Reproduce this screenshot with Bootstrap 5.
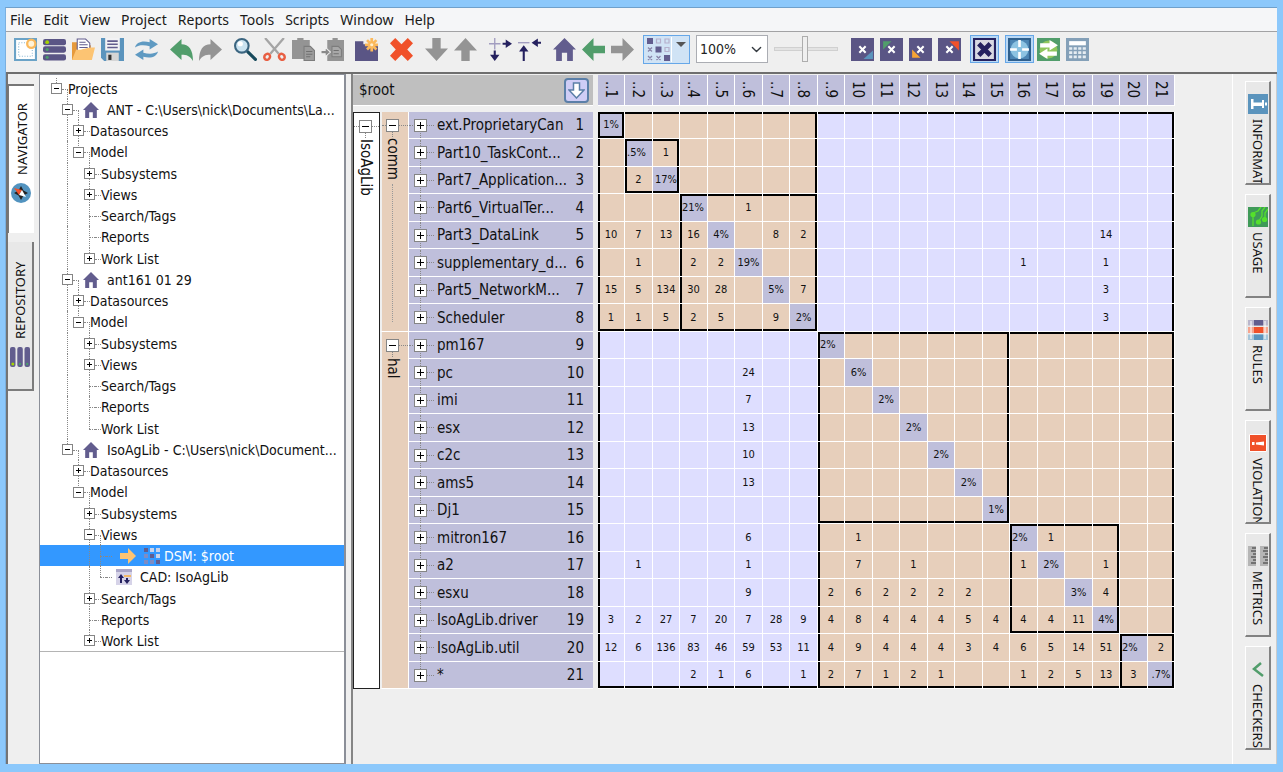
<!DOCTYPE html>
<html lang="en">
<head>
<meta charset="utf-8">
<meta name="viewport" content="width=device-width, initial-scale=1">
<title>IsoAgLib - DSM: $root</title>
<link rel="stylesheet" href="https://cdn.jsdelivr.net/npm/bootstrap@5.3.0/dist/css/bootstrap.min.css">
<style>
:root{--ui:"DejaVu Sans Condensed","Noto Sans",sans-serif;--cell:#bfbfdb;--peach:#e7cfbb;--lav:#dedeff}
body{background:#8cc8fb;font-family:var(--ui);font-size:14px;color:#111;line-height:20px}
button{color:inherit}
.frame{height:100vh;padding:7px 6px 8px 5px}
.app-window{background:#efefef;border-top:1px solid #6fa0cb;border-left:1px solid #7ab0e0}
.menu-row{height:24px;background:#f5f6f8;border-bottom:1px solid #a2a2a4;padding-left:4px;font-family:"Noto Sans",sans-serif}
.menu-row a{color:#1a1a1a;text-decoration:none;margin-right:11px}
.tools{height:42px;padding:0 0 6px 5px;border-bottom:2px solid #6e6e6e}
.tb-group{display:flex;align-items:center;margin-right:6px}
.tb-group.tight{margin-right:5px}
.tb{width:29px;height:28px;padding:0;border:0;background:none;display:flex;align-items:center;justify-content:center}
.tb svg{width:23px;height:23px;display:block}
.tb.on{background:#b9d8f5;border:1px solid #66a7e8}
.split-on{border:1px solid #66a7e8;background:#d0e3f5;height:29px;width:47px;margin-right:6px}
.split-on button{border:0;background:none;padding:0}
.split-on .drop{border-left:1px solid #fff;width:18px;height:25px;padding-bottom:10px;display:flex;align-items:center;justify-content:center}
.zoom-pick{width:72px;height:28px;border:1px solid #abadb3;border-radius:0;padding:0 24px 0 3px;font-size:14px;background-color:#fff;background-position:right 5px center;background-size:11px 11px;color:#222}
.zoom-slide{appearance:none;width:64px;height:26px;margin:0 10px 0 6px;background:none}
.zoom-slide::-webkit-slider-runnable-track{height:4px;background:#e3e3e3;border:1px solid #d0d0d0}
.zoom-slide::-webkit-slider-thumb{appearance:none;width:6px;height:26px;margin-top:-12px;background:#efefef;border:1px solid #adadad}
/* side tabs */
.left-tabs{width:33px;border-left:2px solid #747474;padding:10px 5px 0 0;flex:none}
.side-tab{writing-mode:vertical-rl;display:flex;align-items:center;border:0;padding:0;overflow:hidden;white-space:nowrap;font-family:"Noto Sans",sans-serif;font-size:13px;line-height:20px;background:#e8e8e8;width:100%}
.side-tab svg{width:20px;height:20px;flex:none}
.left-tabs .side-tab{transform:rotate(180deg);height:149px;padding:22px 0;gap:8px;border-left:2px solid #7c7c7c;border-top:2px solid #7c7c7c;margin-bottom:9px}
.left-tabs .side-tab.current{background:#fff;padding-top:30px;border:0;border-bottom:2px solid #777;border-right:1px solid #777}
.right-tabs{width:45px;border-left:1px solid #fff;border-right:1px solid #ccc;padding:7px 5px 0 12px;flex:none}
.right-tabs .side-tab{height:104px;padding-top:12px;gap:5px;border:1px solid #fff;border-right:2px solid #828282;border-bottom:2px solid #828282;margin-bottom:9px}
/* project tree */
.tree-panel{width:307px;border:1px solid #8b8f98;border-right-width:2px;background:#fff;flex:none;padding-top:3px;margin-right:5px}
.tree{border-bottom:1px solid #b4b4b4}
.tree li{display:flex;align-items:stretch;height:21px;line-height:22px;padding-left:11px;white-space:nowrap}
.tree li:nth-child(4n){height:22px}
.tree li.picked{background:#3398ff;color:#fff}
.gd{width:11px;flex:none;display:flex;align-items:center;justify-content:center;position:relative}
.gd::before{content:"";position:absolute;left:5px;border-left:1px dotted #888;top:0;bottom:0;display:none}
.gd.full::before,.gd.up::before{display:block}
.gd.up::before{bottom:50%}
.gd.leaf::after{content:"";position:absolute;left:5px;right:0;top:50%;border-top:1px dotted #888}
.stub{width:6px;flex:none;position:relative}
.stub::before{content:"";position:absolute;left:0;right:0;top:50%;border-top:1px dotted #888}
.stub.open::after{content:"";position:absolute;right:0;top:50%;bottom:0;border-left:1px dotted #888}
.tog{width:11px;height:11px;flex:none;padding:0;border:1px solid #858585;background:#fff;position:relative;z-index:1}
.tog::before,.tog.plus::after{content:"";position:absolute;background:#000;left:2px;right:2px;top:4px;height:1px}
.tog.plus::after{left:4px;right:4px;top:2px;bottom:2px;height:auto}
.tree svg{width:16px;height:16px;align-self:center;flex:none}
/* dependency matrix */
.matrix-pane{min-width:0;border-left:2px solid #858585;padding-top:1px;overflow:hidden}
.dsm{border-collapse:separate;border-spacing:0;table-layout:fixed;width:822px;line-height:16px}
.dsm th,.dsm td{padding:0;font-weight:400;overflow:hidden;white-space:nowrap}
.dsm col.even{width:28px}.dsm col.odd{width:27px}
.dsm col.c-root{width:27px}.dsm col.c-pkg{width:29px}.dsm col.c-name{width:184px}.dsm col.c-gap{width:5px}
.dsm thead th{height:31px;background:var(--cell);border-right:1px solid #fff;border-bottom:1px solid #fff;vertical-align:top}
.dsm thead th.corner{background:#bfbfbf;border-right:0;vertical-align:middle}
.corner>div{padding:0 4px 0 6px}
.dsm thead th.blank,.dsm td.blank{background:none;border:0}
.dsm thead tr.space td{height:6px}
.colno{writing-mode:vertical-rl;font-size:15px;line-height:26px;height:30px;text-align:center}
.corner,.lbl{font-size:15px}
.dsm tbody tr{height:27px}
.dsm tbody tr:nth-child(even){height:28px}
.dsm .rowname{background:var(--cell);border-bottom:1px solid #fff}
.lbl{height:26px;padding:0 9px 0 5px;position:relative}
.lbl::before{content:"";position:absolute;left:11px;top:0;bottom:0;border-left:1px dotted #888}
.lbl.first::before{top:50%}
.lbl.last::before{bottom:50%}
.lbl.first::after{content:"";position:absolute;left:0;width:6px;top:50%;border-top:1px dotted #888}
.dsm .tog{width:13px;height:13px}
.dsm .tog::before{top:5px}
.dsm .tog.plus::after{left:5px;right:5px;top:2px;bottom:2px}
.wire{width:7px;border-top:1px dotted #888;flex:none;margin-right:3px}
.dsm .root-cell{background:#fff;border:1px solid #222}
.dsm .root-cell,.dsm .pkg-cell{vertical-align:top}
.dsm .pkg-cell{background:var(--peach);border-left:2px solid #efefef;border-right:1px solid #fff;border-bottom:1px solid #fff}
.col-stack{display:flex;flex-direction:column;align-items:center;padding:7px 2px 0 0;position:relative}
.pkg-cell .col-stack{padding-right:5px}
.col-stack::before{content:"";position:absolute;left:0;right:0;top:13px;border-top:1px dotted #888}
.pkg-cell.late .col-stack::before{left:50%}
.drop-wire{height:5px;border-left:1px dotted #888}
.down-text{writing-mode:vertical-rl;margin-top:1px;line-height:20px;font-size:15px}
.trail{height:138px;border-left:1px dotted #999;margin-top:4px}
.dsm .num{text-align:center;font-size:11px;background:var(--lav);border-right:1px solid #fff;border-bottom:1px solid #fff;box-shadow:var(--t,0 0 #0000),var(--b,0 0 #0000),var(--l,0 0 #0000),var(--r,0 0 #0000)}
.dsm .num.same{background:var(--peach)}
.dsm .num.self{background:var(--cell)}
.dsm .num.self.e-l:not(.e-r){text-align:left;padding-left:2px}
.e-t{--t:inset 0 2px #000}.e-b{--b:inset 0 -2px #000}.e-l{--l:inset 2px 0 #000}.e-r{--r:inset -2px 0 #000}
.sort-btn{width:25px;height:25px;border:2px solid #5b7fa8;border-radius:4px;background:#cfcdf6;padding:0}
</style>
</head>
<body>
<svg class="d-none" aria-hidden="true">
  <symbol id="i-house" viewBox="0 0 22 22"><path fill="#625d8e" d="M11 0 22 11H19V22H13.500V14H8.500V22H3V11H0Z"/></symbol>
  <symbol id="i-server" viewBox="0 0 22 22"><g fill="#5a5585"><rect y="1" x="0" width="22" height="6" rx="2"/><rect y="8" width="22" height="6" rx="2"/><rect y="15.500" width="22" height="6" rx="2"/></g><circle cx="4" cy="4" r="1.800" fill="#a5d400"/><circle cx="4" cy="11" r="1.500" fill="#4c9c6c"/><circle cx="4" cy="18.500" r="1.500" fill="#4c9c6c"/></symbol>
  <symbol id="i-grid" viewBox="0 0 24 24"><g fill="#625d8e"><path d="M1 1h6v6H1zM9.500 9.500h6v6h-6zM18 18h6v6h-6z"/></g><g fill="none" stroke="#b5b0cc" stroke-width="1.200"><path d="M10.500 2h4v4h-4zM19 2h4v4h-4zM19 10.500h4v4h-4z"/></g><path stroke="#8a86aa" stroke-width="1.300" d="m2 10.500 4 4m0-4-4 4M2 19l4 4m0-4-4 4M10.500 19l4 4m0-4-4 4"/></symbol>
  <symbol id="i-grid-small" viewBox="0 0 16 16"><path fill="#625d8e" d="M0 0h4v4H0zM6 6h4v4H6zM12 12h4v4h-4z"/><path fill="#c9d3ea" d="M6 0h4v4H6zM12 0h4v4h-4zM12 6h4v4h-4z"/><path fill="#7d8cc4" d="M0 6h4v4H0zM0 12h4v4H0zM6 12h4v4H6z"/></symbol>
  <symbol id="i-badge" viewBox="0 0 22 22"><path fill="#5a5585" d="M0 0h22v22H0z"/><path stroke="#fff" stroke-width="2" d="m8 8 6 6m0-6-6 6"/></symbol>
</svg>
<div class="frame">
<div class="app-window d-flex flex-column h-100">
  <nav class="menu-row d-flex align-items-center flex-shrink-0" aria-label="Menu">
    <a href="#">File</a><a href="#">Edit</a><a href="#">View</a><a href="#">Project</a><a href="#">Reports</a><a href="#">Tools</a><a href="#">Scripts</a><a href="#">Window</a><a href="#">Help</a>
  </nav>
  <div class="tools d-flex align-items-center flex-shrink-0" role="toolbar" aria-label="Tools">
    <div class="tb-group tight">
      <button class="tb" aria-label="New"><svg viewBox="0 0 22 22"><path fill="#fff" stroke="#6ba3c7" stroke-width="2" d="M1 1h20v20H1z"/><path fill="none" stroke="#8dbad5" stroke-dasharray="1 1.500" d="M4.500 4.500h13v13h-13z"/><circle cx="16.500" cy="5.500" r="5" fill="#fbb95c"/><circle cx="16.500" cy="5.500" r="2.800" fill="#fff3d8"/></svg></button>
      <button class="tb" aria-label="Repository"><svg><use href="#i-server"/></svg></button>
      <button class="tb" aria-label="Open"><svg viewBox="0 0 22 22"><path fill="#e69a3c" d="M0 4h5l2 3h11v14H0z"/><path fill="#fff" stroke="#625d8e" d="M5 1h8l4 4v8H5z"/><path stroke="#625d8e" d="M7 4h6M7 6.500h8M7 9h8"/><path fill="#fcc473" d="M4 11c6 1 7-2 18-2l-3 12H0z"/></svg></button>
      <button class="tb" aria-label="Save"><svg viewBox="0 0 22 22"><path fill="#5b94bd" d="M0 0h22v22H3l-3-3z"/><path fill="#f2f2f4" d="M4 0h14v12H4z"/><path stroke="#625d8e" stroke-width="1.500" d="M6 3h10M6 6h10M6 9h10"/><path fill="#d5d5d5" d="M5 14h12v8H5z"/><path fill="#333" d="M7 16h3v5H7z"/></svg></button>
    </div>
    <div class="tb-group"><button class="tb" aria-label="Refresh"><svg viewBox="0 0 22 22"><path fill="#5f9ac2" d="M0 9C1 4 7 2 14 4V1l8 5-8 5V8C9 6.500 4 6.500 0 9ZM22 13c-1 5-7 7-14 5v3l-8-5 8-5v3c5 1.500 10 1.500 14-1Z"/></svg></button></div>
    <div class="tb-group">
      <button class="tb" aria-label="Undo"><svg viewBox="0 0 22 22"><path fill="#519d6b" d="M0 11 11 1v5c7 0 11 5 11 16-3-5-6-6-11-6v5Z"/></svg></button>
      <button class="tb" aria-label="Redo"><svg viewBox="0 0 22 22"><path fill="#949494" d="M22 11 11 1v5C4 6 0 11 0 22c3-5 6-6 11-6v5Z"/></svg></button>
    </div>
    <div class="tb-group tight">
      <button class="tb" aria-label="Find"><svg viewBox="0 0 22 22"><path stroke="#174a5c" stroke-width="3" stroke-linecap="round" d="m13 13 7.500 7.500"/><circle cx="7.500" cy="7.500" r="6.500" fill="#cbe3f0" stroke="#3b6580" stroke-width="2"/><circle cx="6" cy="5.500" r="2.500" fill="#fff"/></svg></button>
      <button class="tb" aria-label="Cut"><svg viewBox="0 0 22 22"><path stroke="#a5a5a5" stroke-width="2.200" d="M2 0 15 15M20 0 7 15"/><g fill="none" stroke="#e85f43" stroke-width="2.400"><ellipse cx="4" cy="18" rx="2.600" ry="3" transform="rotate(35 4 18)"/><ellipse cx="18" cy="18" rx="2.600" ry="3" transform="rotate(-35 18 18)"/></g></svg></button>
      <button class="tb" aria-label="Copy"><svg viewBox="0 0 22 22"><path fill="#949494" d="M0 2h5V0h6v2h6v18H0z"/><path fill="#9c9c9c" stroke="#7c7c7c" d="M11.500 8h6l4 4v9.500h-10z"/><path stroke="#707070" d="M13.500 13h6M13.500 15.500h6M13.500 18h4"/></svg></button>
      <button class="tb" aria-label="Paste"><svg viewBox="0 0 22 22"><path fill="#949494" d="M6 2h5V0h5v2h6v20H6z"/><path fill="#8a8a8a" stroke="#efefef" d="M0 12h4V9l5 4.500L4 18v-3H0z"/><path fill="#a8a8a8" stroke="#7c7c7c" d="M10.500 8h6l3 3v7h-9z"/><path stroke="#707070" d="M12 12h5M12 15h5"/></svg></button>
    </div>
    <div class="tb-group"><button class="tb" aria-label="New package"><svg viewBox="0 0 22 22"><path fill="#5a5585" d="M0 6h22v16H0zM0 3h8v4H0z"/><path stroke="#fbb95c" stroke-width="2.600" d="M16 0v13M9.500 6.500h13M11.500 2l9 9M20.500 2l-9 9"/><circle cx="16" cy="6.500" r="1.500" fill="#fff0d0"/></svg></button></div>
    <div class="tb-group"><button class="tb" aria-label="Delete"><svg viewBox="0 0 22 22"><path fill="#f0512a" d="M5 0l6 6 6-6 5 5-5.500 6 5.500 6-5 5-6-6-6 6-5-5 5.500-6L0 5z"/></svg></button></div>
    <div class="tb-group">
      <button class="tb" aria-label="Down"><svg viewBox="0 0 22 22"><path fill="#949494" d="M7 0h8v10h7L11 22 0 10h7z"/></svg></button>
      <button class="tb" aria-label="Up"><svg viewBox="0 0 22 22"><path fill="#949494" d="M7 22h8V12h7L11 0 0 12h7z"/></svg></button>
    </div>
    <div class="tb-group">
      <button class="tb" aria-label="Expand"><svg viewBox="0 0 22 22"><path stroke="#a29dc0" stroke-width="1.300" d="M0 5.500h11M5.500 0v11"/><path fill="#25215f" d="M13 4.500h3V1.500l6 4-6 4v-3h-3zM4.500 12h2v4h3.500L5.500 22 1 16h3.500z"/></svg></button>
      <button class="tb" aria-label="Collapse"><svg viewBox="0 0 22 22"><path stroke="#a29dc0" stroke-width="1.300" d="M0 4.500h11"/><path fill="#25215f" d="M22 3.500h-3V.5l-6 4 6 4v-3h3zM4.500 22h2v-9H10L5.500 7 1 13h3.500z"/></svg></button>
    </div>
    <div class="tb-group">
      <button class="tb" aria-label="Home"><svg><use href="#i-house"/></svg></button>
      <button class="tb" aria-label="Back"><svg viewBox="0 0 22 22"><path fill="#519d6b" d="M22 7.500H11V0L0 11l11 11v-7.500h11z"/></svg></button>
      <button class="tb" aria-label="Forward"><svg viewBox="0 0 22 22"><path fill="#949494" d="M0 7.500h11V0l11 11-11 11v-7.500H0z"/></svg></button>
    </div>
    <div class="split-on d-flex align-items-center">
      <button class="flex-fill" aria-label="Matrix view"><svg class="d-block mx-auto" width="24" height="24"><use href="#i-grid"/></svg></button>
      <button class="drop" aria-label="Matrix view options"><svg width="10" height="5"><path fill="#555" d="M0 0h10L5 5z"/></svg></button>
    </div>
    <select class="form-select zoom-pick" aria-label="Zoom"><option>100%</option><option>50%</option></select>
    <input type="range" class="zoom-slide" min="0" max="100" value="48" aria-label="Zoom level">
    <div class="tb-group">
      <button class="tb" aria-label="Lower right"><svg viewBox="0 0 22 22"><use href="#i-badge"/><path fill="#5b94bd" d="M21 12v8h-9z"/></svg></button>
      <button class="tb" aria-label="Upper left"><svg viewBox="0 0 22 22"><use href="#i-badge"/><path fill="#519d6b" d="M3 3h8l-8 8z"/></svg></button>
      <button class="tb" aria-label="Lower left"><svg viewBox="0 0 22 22"><use href="#i-badge"/><path fill="#f8a534" d="M3 11v8h8z"/></svg></button>
      <button class="tb" aria-label="Upper right"><svg viewBox="0 0 22 22"><use href="#i-badge"/><path fill="#f0512a" d="M11 3h9v9z"/></svg></button>
    </div>
    <div class="tb-group"><button class="tb on" aria-label="Dependencies"><svg viewBox="0 0 22 22"><path fill="#d9d9e2" stroke="#25215f" stroke-width="2" d="M1 1h20v20H1z"/><path stroke="#25215f" stroke-width="4.500" d="m5.500 5.500 11 11m0-11-11 11"/></svg></button></div>
    <div class="tb-group">
      <button class="tb on" aria-label="Partition"><svg viewBox="0 0 22 22"><path fill="#4c86b4" stroke="#2f5f8c" stroke-width="2" d="M1 1h20v20H1z"/><circle cx="11" cy="11" r="8.500" fill="#8cc3e2"/><path stroke="#fff" stroke-width="2.500" d="M11 2v6.500M11 13.500V20M2 11h6.500M13.500 11H20"/></svg></button>
      <button class="tb" aria-label="Swap"><svg viewBox="0 0 22 22"><path fill="#519d6b" d="M0 0h22v22H0z"/><circle cx="11" cy="11" r="8.500" fill="#8fc65c"/><path fill="#fff" d="M3 5h9V2l8 5-8 5V9H3zM19 13h-9v-3l-8 5 8 5v-3h9z"/></svg></button>
      <button class="tb" aria-label="Calculate"><svg viewBox="0 0 22 22"><path fill="#84a0b8" d="M0 0h22v22H0z"/><path fill="#fff" d="M3 3h16v4H3z"/><path stroke="#e6edf2" stroke-width="2.500" stroke-dasharray="3 1.330" d="M3 10h16M3 14h16M3 18h16"/></svg></button>
    </div>
  </div>

  <div class="d-flex flex-fill overflow-hidden">
    <div class="left-tabs">
      <button class="side-tab current"><svg viewBox="0 0 20 20"><circle cx="10" cy="10" r="10" fill="#5293bf"/><path fill="#222" d="M10 3l2.500 4.500L17 10l-4.500 2.500L10 17l-2.500-4.500L3 10l4.500-2.500z"/><path fill="#f0512a" d="M17 15 9 13l3-5z"/><path fill="#fff" d="m12 8-3 5-4-7z"/></svg>NAVIGATOR</button>
      <button class="side-tab"><svg viewBox="0 0 20 20"><g fill="#625d8e"><rect width="5.500" height="20" rx="2"/><rect x="7.200" width="5.500" height="20" rx="2"/><rect x="14.500" width="5.500" height="20" rx="2"/></g><circle cx="17.200" cy="3" r="1.500" fill="#a5d400"/><circle cx="10" cy="3" r="1.200" fill="#4c9c6c"/><circle cx="2.800" cy="3" r="1.200" fill="#4c9c6c"/></svg>REPOSITORY</button>
    </div>
    <div class="tree-panel"><ul class="tree list-unstyled m-0" id="tree"></ul></div>
    <main class="matrix-pane flex-fill">
      <table class="dsm" id="dsm"></table>
    </main>
    <div class="right-tabs">
      <button class="side-tab"><svg viewBox="0 0 20 20"><path fill="#5b94bd" d="M0 0h20v20H0z"/><path fill="#fff" d="M3 5h2.500v3.500H14V6h2v8h-2v-2H5.500v3H3zM17 8.500h2v3h-2z"/></svg>INFORMATION</button>
      <button class="side-tab"><svg viewBox="0 0 20 20"><path fill="#3f9a58" d="M0 0h20v20H0z"/><g fill="none" stroke="#55e02c" stroke-width="1.300"><path d="M5 9v10M11 14l3-5V4l3-4M17 11V6l3-4M5 6l5-2 3-4"/></g><g fill="#55e02c"><circle cx="5" cy="7.500" r="2.600"/><circle cx="10.500" cy="15" r="2.600"/><circle cx="16.500" cy="12.500" r="2.600"/></g></svg>USAGE</button>
      <button class="side-tab"><svg viewBox="0 0 20 20"><path fill="#b9b6cc" d="M0 0h20v5.500H0z"/><path fill="#f6a48e" d="M0 7h20v6H0z"/><path fill="#a4c5da" d="M0 14.500h20V20H0z"/><path fill="#625d8e" d="M6 0h9v5.500H6z"/><path fill="#f0512a" d="M6 7h9v6H6z"/><path fill="#5b94bd" d="M6 14.500h9V20H6z"/><path stroke="#fff" d="M3 1v18M17 1v18"/></svg>RULES</button>
      <button class="side-tab"><svg viewBox="0 0 20 20"><path fill="#f0512a" stroke="#fff" d="M1.500 1.500h17v17h-17z"/><path fill="#fff" d="M4 9h2.500v3H4zM8 9.500l8-1v4l-8-1z"/></svg>VIOLATIONS</button>
      <button class="side-tab"><svg viewBox="0 0 20 20"><path fill="#b5b5b5" d="M0 0h8v20H0zM12 0h8v20h-8z"/><path stroke="#333" stroke-width="1.200" d="M4 2h4M3 5h5M5 8h3M3 11h5M5 14h3M3 17h5M16 2h4M15 5h5M17 8h3M15 11h5M17 14h3M15 17h5"/></svg>METRICS</button>
      <button class="side-tab"><svg viewBox="0 0 20 20"><path fill="none" stroke="#519d6b" stroke-width="2.500" d="M13 4 6 10l9 7"/></svg>CHECKERS</button>
    </div>
  </div>
</div>
</div>
<script>
// Project tree. First field: one character per column left of the label
// (' ' none, '|' line, '+' closed, '-' open, '=' open and last, 'p' closed and last, 't' leaf, 'l' last leaf)
const house='<svg class="me-2 ms-1"><use href="#i-house"/></svg>';
const nodes=[
 ['=','Projects'],[' -','ANT - C:\\Users\\nick\\Documents\\La...',house],
 [' |+','Datasources'],[' |=','Model'],[' | +','Subsystems'],[' | +','Views'],[' | t','Search/Tags'],[' | t','Reports'],[' | p','Work List'],
 [' -','ant161 01 29',house],
 [' |+','Datasources'],[' |=','Model'],[' | +','Subsystems'],[' | +','Views'],[' | t','Search/Tags'],[' | t','Reports'],[' | l','Work List'],
 [' =','IsoAgLib - C:\\Users\\nick\\Document...',house],
 ['  +','Datasources'],['  =','Model'],['   +','Subsystems'],['   -','Views'],
 ['   |t','DSM: $root','<svg class="ms-2" viewBox="0 0 16 16"><path fill="#fcc473" d="M0 5h8V0l8 8-8 8v-5H0z"/></svg><svg class="ms-2 me-1"><use href="#i-grid-small"/></svg>'],
 ['   |l','CAD: IsoAgLib','<svg class="ms-1 me-2" viewBox="0 0 16 16"><path fill="#d6d3e8" d="M0 0h16v16H0z"/><path fill="#aaa6c8" d="M0 0h16v3H0z"/><path fill="#f3b968" d="M8 6h7v2H8z"/><path fill="#25215f" d="M4 14V9H2l3-4 3 4H6v5zM10 9h2v2h2l-3 4-3-4h2z"/></svg>'],
 ['   +','Search/Tags'],['   t','Reports'],['   p','Work List']];
const kinds={' ':'','|':'full','+':'full','-':'full','=':'up','p':'up','t':'full leaf','l':'up leaf'};
document.getElementById('tree').innerHTML=nodes.map(([g,text,pic])=>{
  const cells=[...g].map(k=>`<span class="gd ${kinds[k]}">${'+-=p'.includes(k)?`<button class="tog ${'+p'.includes(k)?'plus':''}" aria-label="Toggle"></button>`:''}</span>`).join('');
  const open='-='.includes(g.at(-1));
  return `<li class="${text.startsWith('DSM')?'picked':''}">${cells}<span class="stub ${open?'open':''}"></span>${pic||''}<span>${text}</span></li>`;
}).join('');

// Dependency matrix: one line per subsystem, comma separated cells
const names=['ext.ProprietaryCan','Part10_TaskCont...','Part7_Application...','Part6_VirtualTer...','Part3_DataLink','supplementary_d...','Part5_NetworkM...','Scheduler','pm167','pc','imi','esx','c2c','ams5','Dj1','mitron167','a2','esxu','IsoAgLib.driver','IsoAgLib.util','*'];
const deps=['1%',',.5%,1',',2,17%',',,,21%,,1','10,7,13,16,4%,,8,2,,,,,,,,,,,14',',1,,2,2,19%,,,,,,,,,,1,,,1','15,5,134,30,28,,5%,7,,,,,,,,,,,3','1,1,5,2,5,,9,2%,,,,,,,,,,,3',
 ',,,,,,,,2%',',,,,,24,,,,6%',',,,,,7,,,,,2%',',,,,,13,,,,,,2%',',,,,,10,,,,,,,2%',',,,,,13,,,,,,,,2%',',,,,,,,,,,,,,,1%',
 ',,,,,6,,,,1,,,,,,2%,1',',1,,,,1,,,,7,,1,,,,1,2%,,1',',,,,,9,,,2,6,2,2,2,2,,,,3%,4','3,2,27,7,20,7,28,9,4,8,4,4,4,5,4,4,4,11,4%','12,6,136,83,46,59,53,11,4,9,4,4,4,3,4,6,5,14,51,2%,2',',,,2,1,6,,1,2,7,1,2,1,,,1,2,5,13,3,.7%'].map(s=>s.split(','));
const modules=[[1,1],[2,3],[4,8],[1,8],[9,15],[16,19],[20,21],[9,21],[1,21]];
const idx=names.map((_,i)=>i+1);
const cell=(r,c)=>{
  const k=new Set(['num']);
  if((r<9)===(c<9))k.add('same');
  if(r===c)k.add('self');
  for(const [a,b] of modules){
    if(r<a||r>b||c<a||c>b)continue;
    if(r===a)k.add('e-t'); if(r===b)k.add('e-b'); if(c===a)k.add('e-l'); if(c===b)k.add('e-r');
  }
  return `<td class="${[...k].join(' ')}">${deps[r-1][c-1]||''}</td>`;
};
const pkg=(cls,span,text,more='')=>`<th class="${cls}" rowspan="${span}"><div class="col-stack"><button class="tog" aria-label="Toggle"></button><span class="drop-wire"></span><span class="down-text">${text}</span>${more}</div></th>`;
const side=r=>r===1?pkg('root-cell',21,'IsoAgLib')+pkg('pkg-cell',8,'comm','<span class="trail"></span>'):r===9?pkg('pkg-cell late',13,'hal'):'';
const ends=r=>r===1||r===9?'first':r===8||r===21?'last':'';
document.getElementById('dsm').innerHTML=
 '<colgroup><col class="c-root"><col class="c-pkg"><col class="c-name"><col class="c-gap">'+idx.map(i=>`<col class="${i%2?'odd':'even'}">`).join('')+'</colgroup>'+
 `<thead><tr><th class="corner" colspan="3"><div class="d-flex align-items-center justify-content-between"><span>$root</span><button class="sort-btn" aria-label="Sort"><svg class="d-block mx-auto" width="17" height="17" viewBox="0 0 17 17"><path fill="#fff" stroke="#5b7fa8" stroke-width="1.500" d="M5.500 1h6v7H16l-7.500 8L1 8h4.500z"/></svg></button></div></th><th class="blank"></th>`+
 idx.map(i=>`<th><div class="colno">${i<10?'..'+i:i}</div></th>`).join('')+'</tr><tr class="space"><td class="blank" colspan="25"></td></tr></thead><tbody>'+
 idx.map(r=>`<tr>${side(r)}<th class="rowname"><div class="d-flex align-items-center lbl ${ends(r)}"><button class="tog plus" aria-label="Expand"></button><span class="wire"></span><span class="flex-fill">${names[r-1]}</span><span>${r}</span></div></th><td class="blank"></td>${idx.map(c=>cell(r,c)).join('')}</tr>`).join('')+'</tbody>';
</script>
<script src="https://cdn.jsdelivr.net/npm/bootstrap@5.3.0/dist/js/bootstrap.bundle.min.js"></script>
</body>
</html>
